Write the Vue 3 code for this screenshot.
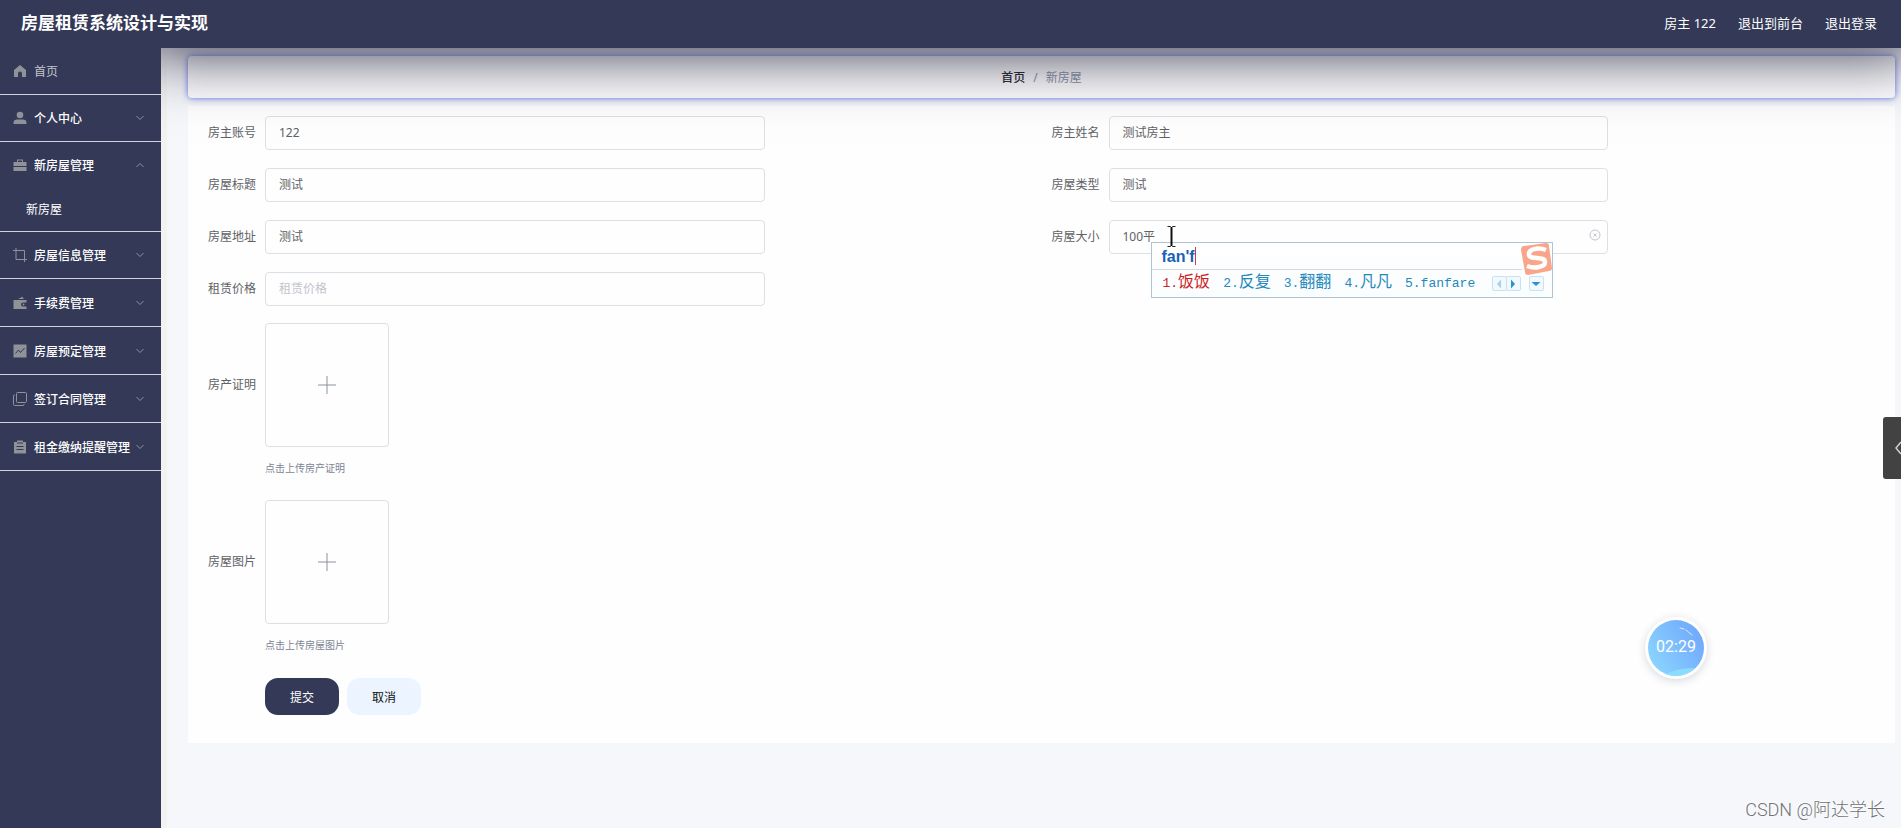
<script setup>
import { ref } from 'vue'

const menus = [
  { title: '首页', icon: 'home', plain: true },
  { title: '个人中心', icon: 'user' },
  { title: '新房屋管理', icon: 'case', open: true, children: ['新房屋'] },
  { title: '房屋信息管理', icon: 'crop' },
  { title: '手续费管理', icon: 'wallet' },
  { title: '房屋预定管理', icon: 'chart' },
  { title: '签订合同管理', icon: 'copy' },
  { title: '租金缴纳提醒管理', icon: 'clipboard' },
]

const fields = ref([
  { id: 'account', label: '房主账号', value: '122' },
  { id: 'owner', label: '房主姓名', value: '测试房主' },
  { id: 'title', label: '房屋标题', value: '测试' },
  { id: 'kind', label: '房屋类型', value: '测试' },
  { id: 'address', label: '房屋地址', value: '测试' },
  { id: 'area', label: '房屋大小', value: '100平', active: true },
  { id: 'price', label: '租赁价格', value: '' },
])

const uploads = [
  { id: 'deed', label: '房产证明', tip: '点击上传房产证明' },
  { id: 'photo', label: '房屋图片', tip: '点击上传房屋图片' },
]

const candidates = ['饭饭', '反复', '翻翻', '凡凡', 'fanfare']
</script>

<template>
  <div class="page">
    <header class="topbar">
      <h1>房屋租赁系统设计与实现</h1>
      <nav class="account">
        <span>房主 122</span>
        <a href="#">退出到前台</a>
        <a href="#">退出登录</a>
      </nav>
    </header>

    <div class="body">
      <aside class="sidebar">
        <ul>
          <li v-for="m in menus" :key="m.title">
            <button type="button" class="entry" :class="{ plain: m.plain }">
              <svg class="icon" viewBox="0 0 14 14" aria-hidden="true">
                <path v-if="m.icon === 'home'" d="M7 1 13 6v7H9V9.500a2 2 0 0 0-4 0V13H1V6z" fill="currentColor" />
                <g v-else-if="m.icon === 'user'" fill="currentColor">
                  <circle cx="7" cy="4" r="3.300" />
                  <path d="M.5 13v-2a3 3 0 0 1 3-2.500h7a3 3 0 0 1 3 2.500v2z" />
                </g>
                <g v-else-if="m.icon === 'case'" fill="currentColor">
                  <path d="M4 4V1.500h6V4h3.500v4H.5V4zM5 4h4V2.500H5z" fill-rule="evenodd" />
                  <path d="M.5 9h13v4H.5z" />
                </g>
                <path v-else-if="m.icon === 'crop'" d="M3 0v11.500h11M0 2.500h11.500V14" fill="none" stroke="currentColor" />
                <g v-else-if="m.icon === 'wallet'" fill="currentColor">
                  <path d="M.5 4H13.500v2.500H10a2 2 0 0 0 0 4h3.500V13H.5z" />
                  <path d="M5 3 9.500.8l1.300 2.200z" />
                  <circle cx="10.500" cy="8.500" r="1" />
                </g>
                <g v-else-if="m.icon === 'chart'">
                  <path d="M.5.5h13v13H.5z" fill="currentColor" />
                  <path d="M2.500 9.500 5.500 6l2 2.500L11.500 4" fill="none" stroke="#343957" />
                </g>
                <g v-else-if="m.icon === 'copy'" fill="none" stroke="currentColor">
                  <rect x="3.500" y=".5" width="10" height="10" rx="1" />
                  <path d="M2 3H1.500q-1 0-1 1v8.500q0 1 1 1H10q1 0 1-1V12" />
                </g>
                <g v-else>
                  <path d="M1 2h3V.5h6V2h3v11.500H1z" fill="currentColor" />
                  <path d="M4 3h6M3.500 6.500h7M3.500 9.500h7" stroke="#343957" />
                </g>
              </svg>
              <span>{{ m.title }}</span>
              <svg v-if="!m.plain" class="arrow" viewBox="0 0 8 8" aria-hidden="true">
                <path :d="m.open ? 'M.5 6 4 2.500 7.500 6' : 'M.5 2 4 5.500 7.500 2'" fill="none" stroke="currentColor" />
              </svg>
            </button>
            <a v-for="c in m.children" :key="c" href="#" class="child">{{ c }}</a>
          </li>
        </ul>
      </aside>

      <main class="main">
        <nav class="crumbs">
          <a href="#">首页</a><span class="slash">/</span><span>新房屋</span>
        </nav>

        <form class="panel" @submit.prevent>
          <div class="fields">
            <div v-for="f in fields" :key="f.id" class="cell">
              <div class="field">
                <label :for="f.id">{{ f.label }}</label>
                <div class="control">
                  <input :id="f.id" v-model="f.value" type="text" :placeholder="f.label" />
                  <template v-if="f.active">
                    <svg class="clear" viewBox="0 0 12 12" aria-hidden="true">
                      <circle cx="6" cy="6" r="5" />
                      <path d="M4.500 4.500l3 3M7.500 4.500l-3 3" />
                    </svg>
                    <div class="ime">
                      <div class="typed">fan'f<i></i></div>
                      <div class="choices">
                        <span v-for="(c, i) in candidates" :key="c">{{ i + 1 }}.<b :class="{ latin: i === 4 }">{{ c }}</b></span>
                        <div class="pager">
                          <button type="button" aria-label="上一页" disabled>
                            <svg viewBox="0 0 12 12"><path d="M8 1.500v9L4 6z" fill="currentColor" /></svg>
                          </button>
                          <button type="button" aria-label="下一页">
                            <svg viewBox="0 0 12 12"><path d="M4 1.500v9L8 6z" fill="currentColor" /></svg>
                          </button>
                        </div>
                        <button type="button" class="more" aria-label="更多">
                          <svg viewBox="0 0 12 12"><path d="M1.500 4h9L6 8z" fill="currentColor" /></svg>
                        </button>
                      </div>
                      <svg class="sogou" viewBox="0 0 32 32" aria-hidden="true">
                        <path d="M4 3 26 0q3 0 3 3l3 22q0 3-3 3L8 32q-3 0-3-3L1 7q0-4 3-4z" fill="#f8a68b" />
                        <path d="M26 7C18 4 8 6 9 12c1 5 16 1 16 7 0 5-10 7-18 4" fill="none" stroke="#fff" stroke-width="4.500" />
                      </svg>
                    </div>
                    <svg class="ibeam" viewBox="0 0 9 21" aria-hidden="true">
                      <path d="M.5.5h3l1 1 1-1h3M.5 20.500h3l1-1 1 1h3" fill="none" stroke="#222" />
                      <path d="M4.500 1v19" stroke="#111" stroke-width="2" />
                    </svg>
                  </template>
                </div>
              </div>
            </div>
          </div>

          <div v-for="u in uploads" :key="u.id" class="upload">
            <label :for="u.id" class="upload-name">{{ u.label }}</label>
            <div>
              <label class="drop">
                <input :id="u.id" type="file" />
                <svg viewBox="0 0 20 20" aria-hidden="true"><path d="M10 1v18M1 10h18" stroke="#8c939d" /></svg>
              </label>
              <p>{{ u.tip }}</p>
            </div>
          </div>

          <div class="actions">
            <button type="submit" class="submit">提交</button>
            <button type="button" class="cancel">取消</button>
          </div>
        </form>
      </main>
    </div>

    <button type="button" class="drawer" aria-label="展开">
      <svg viewBox="0 0 6 14"><path d="M6 1 1 7l5 6" fill="none" stroke="#ccc" stroke-width="1.500" /></svg>
    </button>
    <div class="timer">
      <svg viewBox="0 0 56 56" aria-hidden="true">
        <defs>
          <linearGradient id="sky" x1="0" y1="0.800" x2="1" y2="0.200">
            <stop offset="0" stop-color="#8cd6ff" />
            <stop offset="1" stop-color="#6fa6fb" />
          </linearGradient>
        </defs>
        <circle cx="28" cy="28" r="28" fill="url(#sky)" />
        <path d="M17 54q14-6 30-6-8 8-19 8-6 0-11-2z" fill="#8bdcfd" />
        <path d="M32 8l4 1M38 10l6 5" stroke="#d8eeff" stroke-linecap="round" />
      </svg>
      <span>02:29</span>
    </div>
    <div class="watermark">CSDN @阿达学长</div>
  </div>
</template>

<style>
body { margin: 0; }
</style>

<style scoped>
* { box-sizing: border-box; }
.page {
  min-height: 100vh;
  display: flex;
  flex-direction: column;
  position: relative;
  overflow: hidden;
  background: #f6f7fa;
  font-family: "Noto Sans", "Noto Sans CJK SC", sans-serif;
  font-size: 12px;
  color: #606266;
}
button, input { font: inherit; }
button { border: 0; padding: 0; cursor: pointer; }
a { color: inherit; text-decoration: none; }
svg { display: block; }

.topbar {
  height: 48px;
  padding: 0 24px 2px 21px;
  display: flex;
  align-items: center;
  justify-content: space-between;
  background: #343957;
  color: #fff;
}
h1 { margin: 0; font-size: 17px; line-height: 24px; font-weight: 700; }
.account { display: flex; gap: 22px; font-size: 13px; line-height: 20px; }

.body { flex: 1; display: flex; }
.sidebar { width: 161px; flex: none; background: #343957; color: #fff; }
.sidebar ul { list-style: none; margin: 0; padding: 0; }
.sidebar li { border-bottom: 1px solid #d2d3dc; }
.entry {
  width: 100%;
  height: 46px;
  padding: 0 17px 0 13px;
  display: flex;
  align-items: center;
  background: none;
  color: #fff;
  font-weight: 500;
}
li:nth-child(n + 5) .entry { height: 47px; }
.entry.plain { color: #c3c4cc; font-weight: 400; }
.entry span { white-space: nowrap; }
.icon { width: 14px; height: 14px; margin-right: 7px; flex: none; color: #8f9299; }
.arrow { width: 8px; height: 8px; margin-left: auto; flex: none; color: #8f9299; }
.child { display: block; padding-left: 26px; line-height: 43px; }

.main {
  flex: 1;
  min-width: 0;
  position: relative;
  overflow: hidden;
  padding: 8px 6px 8px 27px;
  background: linear-gradient(to right, #f2f2f2 6px, #f6f7fa 6px);
}
/* Shade cast by the top bar over the content */
.main::before {
  content: "";
  position: absolute;
  top: -200px;
  left: -20px;
  right: -20px;
  height: 200px;
  box-shadow: 0 6px 60px #303048;
  pointer-events: none;
  z-index: 1;
}
.crumbs {
  height: 42px;
  margin-bottom: 8px;
  display: flex;
  align-items: center;
  justify-content: center;
  border-radius: 4px;
  background: #fff;
  box-shadow: 0 0 6px #5c70ee;
  color: #8a93a8;
}
.crumbs a { color: #22242c; font-weight: 500; }
.slash { margin: 0 8px; }

.panel { padding: 10px 0 28px 20px; background: #fefefe; }
.fields { display: grid; grid-template-columns: 1fr 1fr; grid-auto-rows: 34px; row-gap: 18px; }
.field { width: 66%; display: flex; align-items: center; }
.field label { padding-bottom: 2px; }
.field label, .upload-name { width: 57px; flex: none; }
.control { flex: 1; position: relative; }
.control input {
  display: block;
  width: 100%;
  height: 34px;
  padding: 0 13px 2px;
  border: 1px solid #dcdfe6;
  border-radius: 4px;
  background: transparent;
  color: #606266;
  outline: 0;
}
.control input::placeholder { color: #c0c4cc; opacity: 1; }
.clear {
  position: absolute;
  right: 7px;
  top: 9px;
  width: 12px;
  height: 12px;
  fill: none;
  stroke: #c0c4cc;
}
.ibeam { position: absolute; left: 58px; top: 6px; width: 9px; height: 21px; z-index: 4; }
.ime {
  position: absolute;
  z-index: 3;
  left: 42px;
  top: 22px;
  width: 402px;
  border: 1px solid #b0c3d2;
  background: linear-gradient(#fff, #fafdfe);
}
.typed {
  height: 27px;
  margin-right: 30px;
  padding-left: 10px;
  display: flex;
  align-items: center;
  border-bottom: 1px solid #d5d9de;
  font: bold 16px/27px "Liberation Sans", sans-serif;
  color: #1762b8;
}
.typed i { width: 1px; height: 18px; background: #d23a4a; }
.choices {
  height: 27px;
  padding: 0 8px 0 11px;
  display: flex;
  align-items: center;
  gap: 13px;
  font: 13px/26px "Liberation Mono", "Noto Sans CJK SC", monospace;
  color: #2488bb;
  white-space: nowrap;
}
.choices span:first-child { color: #cc1f27; }
.choices b { font-weight: 400; font-size: 16px; }
.choices b.latin { font-size: 13px; }
.pager { margin-left: auto; display: flex; }
.pager button, .more {
  width: 15px;
  height: 15px;
  display: grid;
  place-items: center;
  border: 1px solid #c9e2f2;
  border-radius: 2px;
  background: #f1f9fd;
  color: #2b8fd8;
}
.pager button + button { margin-left: -1px; }
.pager button:disabled { color: #a6d1ec; }
.more { margin-left: -5px; }
.pager svg, .more svg { width: 12px; height: 12px; }
.sogou { position: absolute; right: 0; top: 0; width: 32px; height: 32px; }

.upload { display: flex; margin-top: 17px; }
.upload + .upload { margin-top: 22px; }
.upload-name { line-height: 123px; }
.drop {
  width: 124px;
  height: 124px;
  display: grid;
  place-items: center;
  position: relative;
  border: 1px solid #dcdfe6;
  border-radius: 4px;
  cursor: pointer;
}
.drop input { position: absolute; width: 1px; height: 1px; opacity: 0; }
.drop svg { width: 20px; height: 20px; }
.upload p { margin: 11px 0 0; font-size: 10px; line-height: 20px; color: #7c8494; }
.actions { margin: 23px 0 0 57px; display: flex; gap: 8px; }
.actions button { width: 74px; height: 37px; border-radius: 13px; }
.submit { background: #343957; color: #fff; }
.cancel { background: #ebf4ff; color: #111; }

.drawer {
  position: absolute;
  right: 0;
  top: 417px;
  width: 18px;
  height: 62px;
  display: flex;
  align-items: center;
  justify-content: flex-end;
  border-radius: 3px 0 0 3px;
  background: #424242;
  z-index: 5;
}
.drawer svg { width: 6px; height: 14px; }
.timer {
  position: absolute;
  right: 194px;
  top: 617px;
  width: 62px;
  height: 62px;
  display: grid;
  place-items: center;
  border-radius: 50%;
  background: #fff;
  box-shadow: 0 2px 8px rgba(60, 70, 110, 0.200);
  z-index: 5;
}
.timer svg { width: 56px; height: 56px; grid-area: 1 / 1; }
.timer span { grid-area: 1 / 1; padding-bottom: 2px; font-family: Roboto, sans-serif; font-size: 16px; line-height: 20px; color: #fff; }
.watermark {
  position: absolute;
  right: 16px;
  bottom: 5px;
  font: 300 18px/26px Roboto, "Noto Sans CJK SC", sans-serif;
  color: #707275;
  text-shadow: -1px -1px 0 #fff;
}
</style>
